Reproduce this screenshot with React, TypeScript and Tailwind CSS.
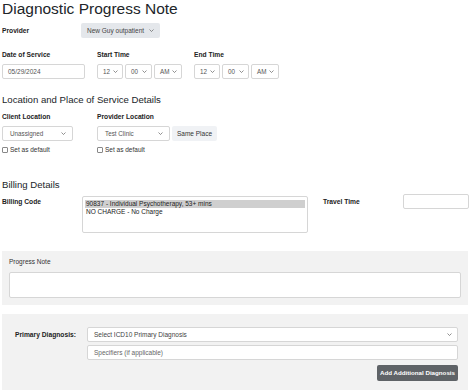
import React from "react";

function Chevron({ className = "" }: { className?: string }) {
  return (
    <svg viewBox="0 0 10 6" className={`w-[5px] h-[3px] shrink-0 ${className}`} fill="none" stroke="#555" strokeWidth="1.3">
      <path d="M1 1l4 4 4-4" />
    </svg>
  );
}

function Select({ value, className = "" }: { value: string; className?: string }) {
  return (
    <div
      className={`h-[15px] flex items-center justify-between border border-[#d6d6d6] rounded-[2px] bg-white pl-[5px] pr-[4px] text-[6.3px] text-[#555] ${className}`}
    >
      <span className="whitespace-nowrap">{value}</span>
      <Chevron />
    </div>
  );
}

function Label({ children, className = "" }: { children: React.ReactNode; className?: string }) {
  return <div className={`text-[6.7px] leading-[8px] font-bold text-[#222] ${className}`}>{children}</div>;
}

function Checkbox() {
  return (
    <div className="flex items-center gap-[2px] text-[6.5px] leading-[8px] text-[#333]">
      <span className="w-[6px] h-[6px] border border-[#888] rounded-[1px] bg-white" />
      <span>Set as default</span>
    </div>
  );
}

export default function App() {
  return (
    <div className="w-[474px] h-[390px] overflow-hidden bg-white font-['Liberation_Sans',Arial,sans-serif] text-[#212529]">
      <h1 className="pl-[2px] text-[15.5px] leading-[18px] font-normal">Diagnostic Progress Note</h1>

      <div className="flex items-center mt-[5px] h-[15px]">
        <Label className="w-[81px] pl-[2px]">Provider</Label>
        <div className="w-[79px] h-[15px] flex items-center justify-between rounded-[2px] bg-[#e4e7eb] pl-[6px] pr-[6px] text-[6.5px] text-[#444]">
          <span>New Guy outpatient</span>
          <Chevron />
        </div>
      </div>

      <div className="flex mt-[13px] pl-[2px]">
        <div className="w-[95px]">
          <Label>Date of Service</Label>
          <div className="mt-[5px] w-[83px] h-[15px] flex items-center border border-[#d6d6d6] rounded-[2px] pl-[5px] text-[6.5px] text-[#555]">
            05/29/2024
          </div>
        </div>
        <div className="w-[97px]">
          <Label>Start Time</Label>
          <div className="mt-[5px] flex gap-[2px]">
            <Select value="12" className="w-[26px]" />
            <Select value="00" className="w-[27px]" />
            <Select value="AM" className="w-[28px]" />
          </div>
        </div>
        <div>
          <Label>End Time</Label>
          <div className="mt-[5px] flex gap-[2px]">
            <Select value="12" className="w-[26px]" />
            <Select value="00" className="w-[27px]" />
            <Select value="AM" className="w-[28px]" />
          </div>
        </div>
      </div>

      <h2 className="mt-[15px] pl-[2px] text-[9.6px] leading-[12px] font-normal">Location and Place of Service Details</h2>

      <div className="flex mt-[7px] pl-[2px]">
        <div className="w-[95px]">
          <Label>Client Location</Label>
          <Select value="Unassigned" className="mt-[5px] w-[71px] pl-[7px] pr-[6px]" />
          <div className="mt-[5px]">
            <Checkbox />
          </div>
        </div>
        <div>
          <Label>Provider Location</Label>
          <div className="mt-[5px] flex gap-[2px]">
            <Select value="Test Clinic" className="w-[73px] pl-[7px] pr-[6px]" />
            <div className="h-[15px] px-[5px] flex items-center bg-[#f0f2f5] rounded-[2px] text-[6.5px] text-[#333]">Same Place</div>
          </div>
          <div className="mt-[5px]">
            <Checkbox />
          </div>
        </div>
      </div>

      <h2 className="mt-[25px] pl-[2px] text-[9.6px] leading-[12px] font-normal">Billing Details</h2>

      <div className="flex items-start mt-[3px] pl-[2px]">
        <Label className="w-[80px] mt-[4px]">Billing Code</Label>
        <div className="mt-[2px] w-[226px] h-[37px] border border-[#d6d6d6] rounded-[2px] px-[2px] pt-[3px] text-[6.5px] leading-[8px] text-[#222]">
          <div className="bg-[#cfcfcf] px-[1px]">90837 - Individual Psychotherapy, 53+ mins</div>
          <div className="px-[1px]">NO CHARGE - No Charge</div>
        </div>
        <Label className="ml-[15px] w-[80px] mt-[4px]">Travel Time</Label>
        <div className="w-[66px] h-[15px] border border-[#d6d6d6] rounded-[2px]" />
      </div>

      <div className="mt-[18px] ml-[2px] w-[466px] h-[54px] bg-[#f2f2f2] px-[7px] pt-[7px]">
        <div className="text-[6.5px] leading-[8px] text-[#333]">Progress Note</div>
        <div className="mt-[6px] h-[26px] bg-white border border-[#d6d6d6] rounded-[2px]" />
      </div>

      <div className="mt-[9px] ml-[2px] w-[466px] h-[80px] bg-[#f2f2f2] pl-[13px] pr-[10px] pt-[13px]">
        <div className="flex">
          <Label className="w-[72px] mt-[4px]">Primary Diagnosis:</Label>
          <div className="flex-1">
            <div className="h-[15px] flex items-center justify-between border border-[#d6d6d6] rounded-[2px] bg-white pl-[6px] pr-[5px] text-[6.5px] text-[#444]">
              <span>Select ICD10 Primary Diagnosis</span>
              <Chevron />
            </div>
            <div className="mt-[3px] h-[15px] flex items-center border border-[#d6d6d6] rounded-[2px] bg-white pl-[6px] text-[6.5px] text-[#666]">
              Specifiers (if applicable)
            </div>
            <div className="mt-[5px] flex justify-end">
              <div className="h-[16px] px-[3px] flex items-center bg-[#5f6367] rounded-[2px] text-white font-bold text-[6.2px]">
                Add Additional Diagnosis
              </div>
            </div>
          </div>
        </div>
      </div>
    </div>
  );
}
